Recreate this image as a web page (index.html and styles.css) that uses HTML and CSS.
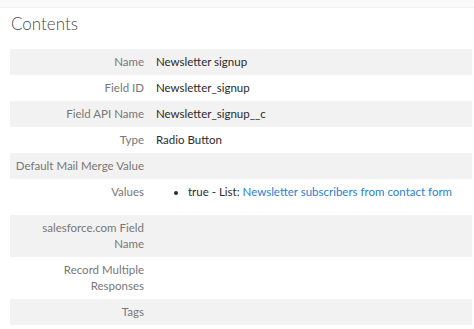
FILE: index.html
```html
<!DOCTYPE html>
<html lang="en">
<head>
    <meta charset="UTF-8">
    <title>Contents</title>
    <link rel="stylesheet" href="styles.css">
</head>
<body>
    <div class="top-band"></div>
    <div class="contents">
        <h2 class="contents-title">Contents</h2>

        <div class="field-list">
            <div class="field-row">
                <div class="field-label">Name</div>
                <div class="field-value">Newsletter signup</div>
            </div>
            <div class="field-row">
                <div class="field-label">Field ID</div>
                <div class="field-value">Newsletter_signup</div>
            </div>
            <div class="field-row">
                <div class="field-label">Field API Name</div>
                <div class="field-value">Newsletter_signup__c</div>
            </div>
            <div class="field-row">
                <div class="field-label">Type</div>
                <div class="field-value">Radio Button</div>
            </div>
            <div class="field-row">
                <div class="field-label">Default Mail Merge Value</div>
                <div class="field-value"></div>
            </div>
            <div class="field-row">
                <div class="field-label">Values</div>
                <div class="field-value">
                    <ul class="value-list">
                        <li>true - List: <a href="#" class="link">Newsletter subscribers from contact form</a></li>
                    </ul>
                </div>
            </div>
            <div class="field-row">
                <div class="field-label">salesforce.com Field Name</div>
                <div class="field-value"></div>
            </div>
            <div class="field-row">
                <div class="field-label">Record Multiple Responses</div>
                <div class="field-value"></div>
            </div>
            <div class="field-row">
                <div class="field-label">Tags</div>
                <div class="field-value"></div>
            </div>
        </div>
    </div>
</body>
</html>
```

FILE: styles.css
```css
body {
    font-family: Lato, Arial, sans-serif;
    margin: 0;
    padding: 0;
    background-color: white;
    color: #333;
}
.top-band {
    height: 7px;
    background-color: #fafafa;
    border-bottom: 1px solid #f2f2f2;
}
.contents {
    padding: 0 2px 0 10px;
}
.contents-title {
    font-size: 17px;
    font-weight: 300;
    color: #4a4a4a;
    margin: 0;
    padding: 4px 0 0 1px;
    height: 37px;
    line-height: 24px;
}
.field-row {
    display: flex;
    font-size: 11.5px;
    line-height: 16px;
}
.field-row:nth-child(odd) {
    background-color: #f3f2f2;
}
.field-label {
    width: 131px;
    flex-shrink: 0;
    padding: 5px 0 5px 3px;
    text-align: right;
    color: #777;
}
.field-value {
    flex: 1;
    padding: 5px 0 5px 12px;
    color: #2b2b2b;
}
.value-list {
    margin: 0 0 10px 0;
    padding-left: 32px;
}
.link {
    color: #2a80cf;
    text-decoration: none;
}
```
